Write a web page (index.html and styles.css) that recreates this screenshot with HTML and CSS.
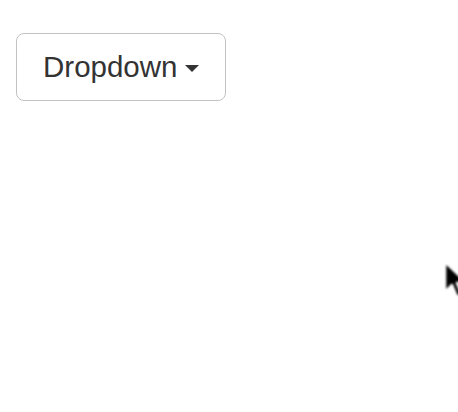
FILE: index.html
```html
<!DOCTYPE html>
<html>
<head>
<meta charset="utf-8">
<link rel="stylesheet" href="styles.css">
</head>
<body>
<div class="page">
  <button class="btn" type="button">Dropdown<span class="caret"></span></button>
</div>
<svg class="cursor" width="26" height="40" viewBox="0 0 26 40">
  <path d="M2 2 L2 32 L9 25 L14 37 L19 35 L14 23 L24 23 Z" fill="#000" stroke="#fff" stroke-width="2.5" stroke-linejoin="round"/>
</svg>
</body>
</html>
```
FILE: styles.css
```css
html, body {
  margin: 0;
  padding: 0;
  background: #fff;
  width: 458px;
  height: 412px;
  overflow: hidden;
  position: relative;
}
.page {
  padding: 33px 0 0 16px;
}
.btn {
  display: inline-flex;
  align-items: center;
  box-sizing: border-box;
  height: 68px;
  width: 210px;
  padding: 0 0 1px 26px;
  border: 1px solid #c2c2c2;
  border-radius: 8px;
  background: #fff;
  color: #333;
  font-family: "Liberation Sans", Arial, sans-serif;
  font-size: 29.5px;
  line-height: 40px;
}
.caret {
  display: inline-block;
  width: 0;
  height: 0;
  margin-left: 8px;
  margin-top: 4px;
  border-top: 7px solid #333;
  border-left: 7px solid transparent;
  border-right: 7px solid transparent;
}
.cursor {
  position: absolute;
  left: 443px;
  top: 260px;
  filter: blur(0.8px);
}
```
